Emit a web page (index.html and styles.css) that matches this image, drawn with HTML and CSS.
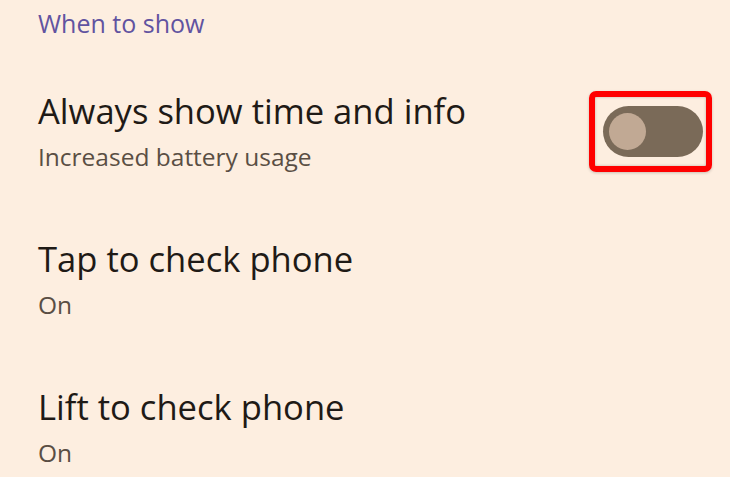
FILE: index.html
```html
<!DOCTYPE html>
<html>
<head>
<meta charset="utf-8">
<link rel="stylesheet" href="styles.css">
</head>
<body>
<div class="screen">
  <div class="section-title">When to show</div>
  <div class="row">
    <div class="row-text">
      <div class="title">Always show time and info</div>
      <div class="summary">Increased battery usage</div>
    </div>
    <div class="highlight">
      <div class="switch"><div class="thumb"></div></div>
    </div>
  </div>
  <div class="row">
    <div class="row-text">
      <div class="title">Tap to check phone</div>
      <div class="summary">On</div>
    </div>
  </div>
  <div class="row last">
    <div class="row-text">
      <div class="title">Lift to check phone</div>
      <div class="summary">On</div>
    </div>
  </div>
</div>
</body>
</html>
```

FILE: styles.css
```css
html, body {
  margin: 0;
  padding: 0;
  background: #fdeee0;
}
.screen {
  width: 730px;
  height: 477px;
  box-sizing: border-box;
  overflow: hidden;
  padding: 0 18px 0 38px;
  font-family: "Open Sans", "Noto Sans", sans-serif;
}
.section-title {
  color: #6153a0;
  font-size: 25px;
  line-height: 30px;
  padding-top: 8px;
  height: 60px;
  box-sizing: border-box;
}
.row {
  display: flex;
  justify-content: space-between;
  align-items: flex-start;
  height: 148px;
  padding-top: 30px;
  box-sizing: border-box;
}
.row.last {
  height: auto;
}
.title {
  color: #1f1a16;
  font-size: 34.6px;
  line-height: 42px;
}
.summary {
  color: #5a4e44;
  font-size: 24.5px;
  line-height: 44px;
  padding-top: 3px;
}
.highlight {
  margin-top: 1px;
  width: 123px;
  height: 81px;
  box-sizing: border-box;
  border: 6px solid #ff0000;
  border-radius: 7px;
  display: flex;
  align-items: center;
  padding-left: 8px;
  box-shadow: inset 0 0 3px rgba(0,0,0,0.25), 0 1px 3px rgba(0,0,0,0.2);
}
.switch {
  width: 100px;
  height: 51px;
  border-radius: 26px;
  background: #7a6a58;
  display: flex;
  align-items: center;
  padding-left: 6px;
  box-sizing: border-box;
}
.thumb {
  width: 37px;
  height: 37px;
  border-radius: 50%;
  background: #c1a994;
}
```
